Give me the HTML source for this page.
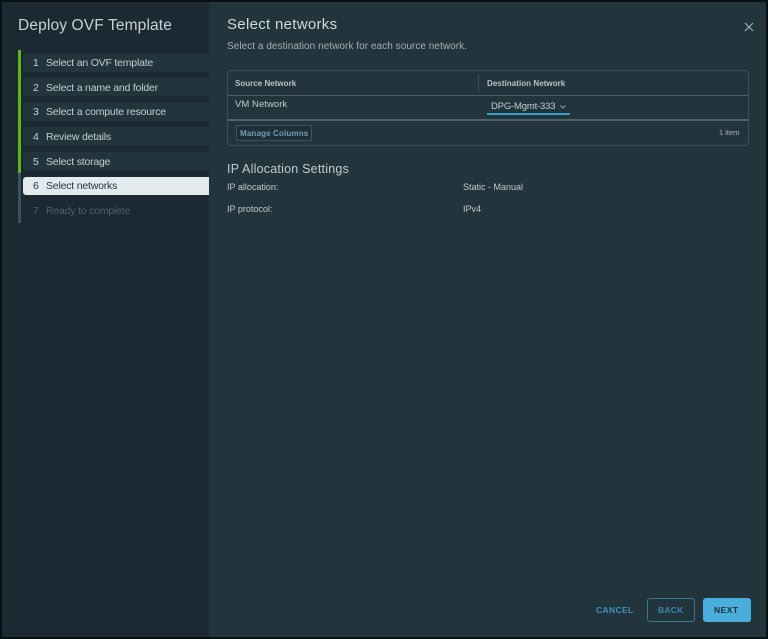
<!DOCTYPE html>
<html>
<head>
<meta charset="utf-8">
<style>
html,body{margin:0;padding:0;width:768px;height:639px;overflow:hidden;background:#0a1114;font-family:"Liberation Sans",sans-serif;}
*{box-sizing:border-box;}
.abs,.abs *{position:absolute;white-space:nowrap;}
.t{line-height:14px;}
#side{left:2px;top:2px;width:207px;height:635px;background:#1b2a32;}
#main{left:209px;top:2px;width:557px;height:635px;background:#22343c;}
.step{left:23px;width:186px;height:18px;background:#22343c;border-radius:3px 0 0 3px;}
.n{left:33px;font-size:10.5px;color:#c6ced2;}
.l{left:46px;font-size:10.5px;color:#c6ced2;letter-spacing:-.2px;}
.g{color:#c1cacd;}
</style>
</head>
<body>
<div class="abs" style="left:0;top:0;width:768px;height:639px;">
<div id="side"></div>
<div id="main"></div>
<div class="t" style="left:18px;top:18px;font-size:15.5px;line-height:16px;color:#c9d1d5;letter-spacing:.14px;">Deploy OVF Template</div>

<div style="left:18px;top:50px;width:3px;height:123px;background:#5eb715;"></div>
<div style="left:18px;top:173px;width:3px;height:50px;background:#3f525b;"></div>

<div class="step" style="top:54px;"></div>
<div class="step" style="top:78px;"></div>
<div class="step" style="top:103px;"></div>
<div class="step" style="top:127px;"></div>
<div class="step" style="top:152px;"></div>
<div class="step" style="top:177px;background:#e3eaee;"></div>

<div class="t n" style="top:56px;">1</div><div class="t l" style="top:56px;">Select an OVF template</div>
<div class="t n" style="top:81px;">2</div><div class="t l" style="top:81px;">Select a name and folder</div>
<div class="t n" style="top:105px;">3</div><div class="t l" style="top:105px;">Select a compute resource</div>
<div class="t n" style="top:130px;">4</div><div class="t l" style="top:130px;">Review details</div>
<div class="t n" style="top:155px;">5</div><div class="t l" style="top:155px;">Select storage</div>
<div class="t n" style="top:179px;color:#28373e;">6</div><div class="t l" style="top:179px;color:#28373e;">Select networks</div>
<div class="t n" style="top:204px;color:#4f5f67;">7</div><div class="t l" style="top:204px;color:#4f5f67;">Ready to complete</div>

<div class="t" style="left:227px;top:16px;font-size:15px;line-height:17px;color:#d2dade;letter-spacing:.3px;">Select networks</div>
<div class="t" style="left:227px;top:40px;font-size:10px;color:#a5b0b5;letter-spacing:.05px;">Select a destination network for each source network.</div>

<svg style="left:744px;top:22px;" width="10" height="10" viewBox="0 0 10 10"><path d="M1 1L9 9M9 1L1 9" stroke="#aeb9be" stroke-width="1" fill="none"/></svg>

<div style="left:227px;top:70px;width:522px;height:76px;border:1px solid #3d4f58;border-radius:3px;"></div>
<div style="left:228px;top:95px;width:520px;height:1px;background:#4c5d65;"></div>
<div style="left:228px;top:119px;width:520px;height:2px;background:#53636b;"></div>
<div style="left:478px;top:74px;width:1px;height:17px;background:#3a4c55;"></div>

<div class="t" style="left:235px;top:77px;font-size:8px;font-weight:bold;color:#b9c3c8;letter-spacing:.02px;">Source Network</div>
<div class="t" style="left:487px;top:77px;font-size:8px;font-weight:bold;color:#b9c3c8;letter-spacing:.05px;">Destination Network</div>
<div class="t" style="left:235px;top:98px;font-size:9.5px;color:#c1cacd;letter-spacing:.05px;">VM Network</div>
<div class="t" style="left:491px;top:100px;font-size:9.5px;color:#c6ced2;letter-spacing:-.18px;">DPG-Mgmt-333</div>
<svg style="left:559px;top:104px;" width="8" height="6" viewBox="0 0 8 6"><path d="M1.5 1.5L4 4L6.5 1.5" stroke="#8f9da3" stroke-width="1" fill="none"/></svg>
<div style="left:487px;top:113px;width:83px;height:2px;background:#3d9ccb;"></div>

<div style="left:236px;top:125px;width:76px;height:16px;border:1px solid #3e535e;border-radius:2px;background:#1f2f37;"></div>
<div class="t" style="left:240px;top:127px;font-size:8px;font-weight:bold;color:#6f9fb6;letter-spacing:.15px;">Manage Columns</div>
<div class="t" style="left:719px;top:126px;font-size:7.5px;color:#aeb8bd;">1 item</div>

<div class="t" style="left:227px;top:162px;font-size:12.5px;color:#c3ccd0;letter-spacing:.22px;">IP Allocation Settings</div>
<div class="t g" style="left:227px;top:180px;font-size:9px;">IP allocation:</div>
<div class="t g" style="left:463px;top:180px;font-size:9px;">Static - Manual</div>
<div class="t g" style="left:227px;top:202px;font-size:9px;">IP protocol:</div>
<div class="t g" style="left:463px;top:202px;font-size:9px;">IPv4</div>

<div class="t" style="left:596px;top:603px;font-size:8.5px;font-weight:bold;color:#3f93bd;letter-spacing:.35px;">CANCEL</div>
<div style="left:647px;top:598px;width:48px;height:24px;border:1px solid #3c7590;border-radius:3px;"></div>
<div class="t" style="left:658px;top:603px;font-size:8.5px;font-weight:bold;color:#3f88ac;letter-spacing:.25px;">BACK</div>
<div style="left:703px;top:598px;width:48px;height:24px;background:#49aedb;border-radius:3px;"></div>
<div class="t" style="left:714px;top:603px;font-size:8.5px;font-weight:bold;color:#1d2f38;letter-spacing:.45px;">NEXT</div>
</div>
</body>
</html>
